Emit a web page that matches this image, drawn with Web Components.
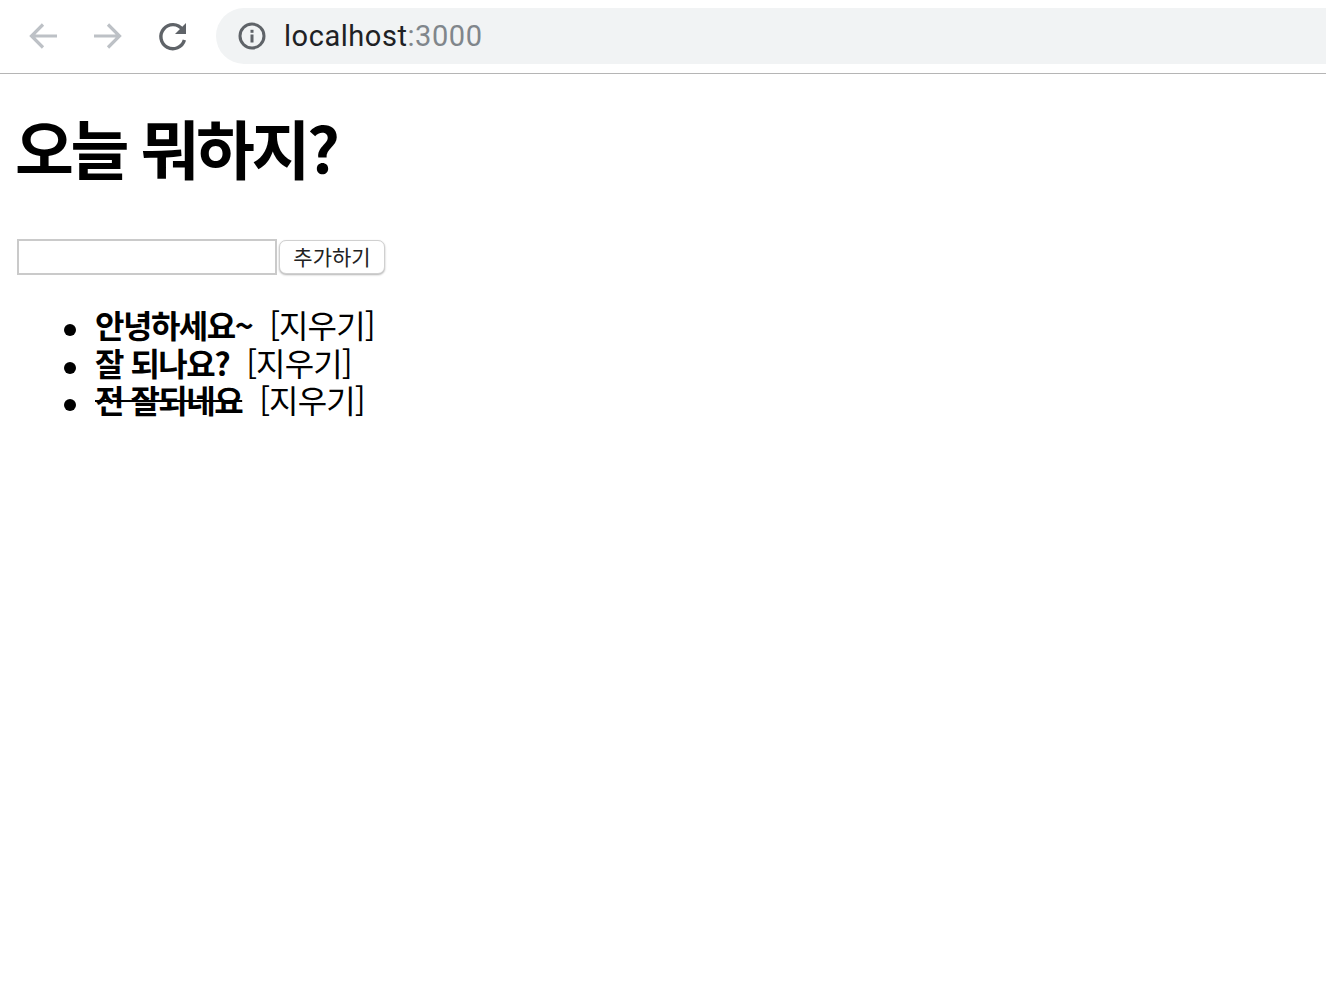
<!DOCTYPE html>
<html lang="ko">
<head>
<meta charset="utf-8">
<title>오늘 뭐하지?</title>
<style>
  html, body { margin: 0; padding: 0; background: #fff; }
  body { font-family: "Noto Sans CJK KR", "Liberation Sans", sans-serif; }
</style>
</head>
<body>
<browser-bar url="localhost" port=":3000"></browser-bar>
<todo-app>
  <todo-item>안녕하세요~</todo-item>
  <todo-item>잘 되나요?</todo-item>
  <todo-item done>전 잘되네요</todo-item>
</todo-app>
<script>
class BrowserBar extends HTMLElement {
  constructor() {
    super();
    this.shadowDOM = this.attachShadow({ mode: "open" });
  }
  connectedCallback() {
    this.shadowDOM.innerHTML = `
      <style>
        :host {
          display: flex;
          align-items: center;
          height: 73px;
          border-bottom: 1px solid #b5b5b5;
          padding-left: 28px;
          box-sizing: content-box;
          overflow: hidden;
        }
        svg { display: block; flex: none; }
        .back { margin-right: 31px; margin-top: -1px; }
        .forward { margin-right: 34px; margin-top: -1px; }
        .reload { margin-right: 27px; margin-top: -1px; }
        .omni {
          flex: 1;
          height: 56px;
          margin-right: -40px;
          margin-top: -1px;
          border-radius: 28px;
          background: #f1f3f4;
          display: flex;
          align-items: center;
          padding-left: 22px;
          font: 29px Roboto, "Liberation Sans", sans-serif;
          letter-spacing: 0.55px;
          color: #202124;
        }
        .omni svg { margin-right: 18px; }
        .port { color: #80868b; }
      </style>
      <svg class="back" width="32" height="32" viewBox="0 0 32 32" fill="none" stroke="#bdc1c6" stroke-width="3.2">
        <path d="M29 16H4M15 4.500 3.500 16 15 27.500"/>
      </svg>
      <svg class="forward" width="32" height="32" viewBox="0 0 32 32" fill="none" stroke="#bdc1c6" stroke-width="3.200">
        <path d="M3 16h25M17 4.500 28.500 16 17 27.500"/>
      </svg>
      <svg class="reload" width="32" height="32" viewBox="0 0 32 32">
        <path fill="none" stroke="#5f6368" stroke-width="3.400" d="M25.500 9.500A12 12 0 1 0 27.400 20"/>
        <path fill="#5f6368" d="M29 3V14H18z"/>
      </svg>
      <div class="omni">
        <svg width="28" height="28" viewBox="0 0 28 28">
          <circle cx="14" cy="14" r="12" fill="none" stroke="#5f6368" stroke-width="3"/>
          <rect x="12.500" y="12.500" width="3" height="8" fill="#5f6368"/>
          <rect x="12.500" y="7.800" width="3" height="3" fill="#5f6368"/>
        </svg>
        <span>${this.getAttribute("url")}</span><span class="port">${this.getAttribute("port")}</span>
      </div>
    `;
  }
}

class TodoApp extends HTMLElement {
  constructor() {
    super();
    this.shadowDOM = this.attachShadow({ mode: "open" });
  }
  connectedCallback() {
    this.shadowDOM.innerHTML = `
      <style>
        :host { display: block; padding: 0 17px; color: #000; }
        h1 {
          margin: 0 0 0 -2px;
          padding-top: 31px;
          font-size: 64px;
          line-height: 82px;
          font-weight: 700;
          letter-spacing: -3.4px;
        }
        form {
          display: flex;
          align-items: center;
          margin-top: 52px;
        }
        input {
          width: 260px;
          height: 36px;
          box-sizing: border-box;
          margin: 0;
          border: 2px solid #cacaca;
          background: #fff;
        }
        button {
          margin-left: 2px;
          width: 106px;
          height: 34px;
          box-sizing: border-box;
          padding: 0 0 2px;
          border: 1px solid #d0d0d0;
          border-radius: 7px;
          background: #fff;
          box-shadow: 0 1px 2px rgba(0, 0, 0, 0.3);
          font: 21px/1 "Noto Sans CJK KR", sans-serif;
          color: #222;
        }
        ul {
          margin: 35px 0 0;
          padding: 0 0 0 78px;
        }
      </style>
      <h1>오늘 뭐하지?</h1>
      <form onsubmit="return false">
        <input type="text">
        <button type="button">추가하기</button>
      </form>
      <ul><slot></slot></ul>
    `;
  }
}

class TodoItem extends HTMLElement {
  constructor() {
    super();
    this.shadowDOM = this.attachShadow({ mode: "open" });
  }
  connectedCallback() {
    const done = this.hasAttribute("done");
    this.shadowDOM.innerHTML = `
      <style>
        :host {
          display: list-item;
          list-style: disc;
          font-size: 32px;
          line-height: 37.500px;
        }
        b, span { vertical-align: 4px; line-height: 24px; }
        b { letter-spacing: -1.500px; ${done ? "text-decoration: line-through; text-decoration-thickness: 2px;" : ""} }
        span { margin-left: 17px; letter-spacing: -0.900px; }
      </style>
      <b><slot></slot></b><span>[지우기]</span>
    `;
  }
}

customElements.define("browser-bar", BrowserBar);
customElements.define("todo-app", TodoApp);
customElements.define("todo-item", TodoItem);
</script>
</body>
</html>
